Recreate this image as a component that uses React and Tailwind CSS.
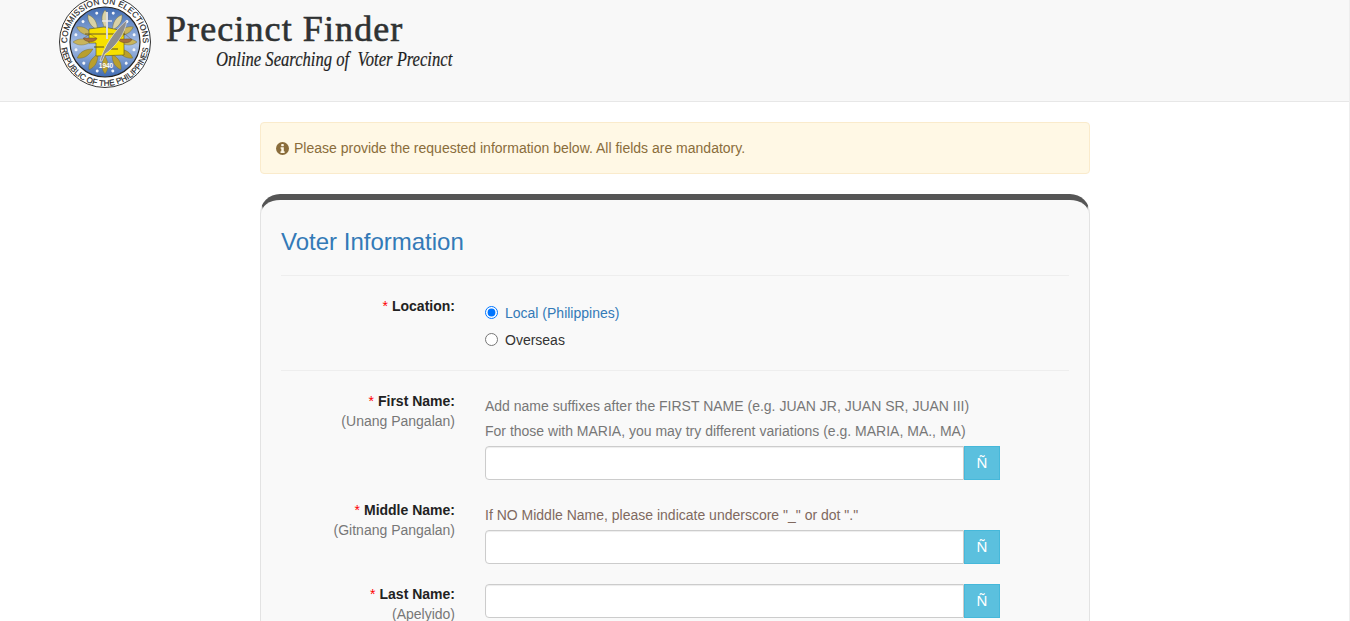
const SANS = 'font-["Liberation_Sans",Arial,sans-serif]'

function Seal() {
  const leaves = [0, 32, 62, 90, 120, 150, 180, 210, 240, 270, 298, 328]
  const dots = [16, 47, 76, 105, 135, 165, 195, 225, 255, 284, 313, 344]
  const leafColor = (a) => (a > 60 && a < 300 ? (a > 100 && a < 260 ? '#b99f2e' : '#c9b45c') : '#d9d2a6')
  return (
    <svg width="94" height="94" viewBox="0 0 94 94" className="block shrink-0">
      <defs>
        <linearGradient id="sky" x1="0" y1="0" x2="0" y2="1">
          <stop offset="0%" stopColor="#3f6bb2" />
          <stop offset="55%" stopColor="#a9c0e6" />
          <stop offset="100%" stopColor="#3f6bb2" />
        </linearGradient>
        <path id="arcTop" d="M 9 47 A 38 38 0 0 1 85 47" />
        <path id="arcBottom" d="M 3 47 A 44 44 0 0 0 91 47" />
      </defs>
      <circle cx="47" cy="47" r="45.5" fill="#fff" stroke="#333" strokeWidth="1" />
      <circle cx="47" cy="47" r="35" fill="url(#sky)" stroke="#222" strokeWidth="1.2" />
      <text fontSize="8.2" fill="#222" fontFamily="Liberation Sans, sans-serif" letterSpacing="0.2" stroke="#222" strokeWidth="0.15">
        <textPath href="#arcTop" startOffset="50%" textAnchor="middle">COMMISSION ON ELECTIONS</textPath>
      </text>
      <text fontSize="8.2" fill="#222" fontFamily="Liberation Sans, sans-serif" stroke="#222" strokeWidth="0.15">
        <textPath href="#arcBottom" startOffset="50%" textAnchor="middle">REPUBLIC OF THE PHILIPPINES</textPath>
      </text>
      {leaves.map((a) => (
        <path key={a} d="M47 15 C51 20 51 26 47 33 C43 26 43 20 47 15Z" fill={leafColor(a)} stroke="#6f6a33" strokeWidth="0.4" transform={`rotate(${a} 47 47)`} />
      ))}
      {dots.map((a) => (
        <circle key={a} cx="47" cy="17" r="1.5" fill="#f2f5fb" transform={`rotate(${a} 47 47)`} />
      ))}
      <path d="M31 34 L46 32 L66 36 V60 L38 61 V48 H31Z" fill="#f7e000" stroke="#57501a" strokeWidth="0.6" />
      <path d="M36 52 H46 M52 54 H60" stroke="#57501a" strokeWidth="1" />
      <path d="M27 39 H67" stroke="#6a5a2a" strokeWidth="1.2" />
      <path d="M25 43 H39 C38 48 27 48 25 43Z M60 44 H74 C73 49 62 49 60 44Z" fill="#a8703c" stroke="#5c4424" strokeWidth="0.4" />
      <path d="M32 39 L26 43 M32 39 L38 43 M67 39 L61 44 M67 39 L73 44" stroke="#5c4424" strokeWidth="0.4" />
      <path d="M49 17 V44" stroke="#dcdcdc" strokeWidth="2" />
      <path d="M44 26 H54" stroke="#e8e8e8" strokeWidth="1.4" />
      <path d="M42 66 C46 52 56 36 69 25 C67 40 57 52 47 59 L44 66Z" fill="#8e8e8e" stroke="#efefef" strokeWidth="0.6" />
      <text x="48" y="73" fontSize="6.5" fill="#fff" textAnchor="middle" fontFamily="Liberation Sans, sans-serif" fontWeight="700">1940</text>
    </svg>
  )
}

function InfoIcon() {
  return (
    <svg width="13" height="13" viewBox="0 0 13 13" className="mr-[5px] inline-block shrink-0">
      <circle cx="6.5" cy="6.5" r="6.5" fill="#8a6d3b" />
      <rect x="5.2" y="2" width="2.6" height="2.2" rx="0.4" fill="#fff8e5" />
      <path d="M4.6 5.3 H7.8 V9.3 H8.6 V10.9 H4.5 V9.3 H5.3 V6.8 H4.6Z" fill="#fff8e5" />
    </svg>
  )
}

function Label({ name, sub }) {
  return (
    <div className="w-[174px] shrink-0 text-right">
      <div className="h-5 leading-5 font-bold text-[#222]">
        <span className="mr-1 font-normal text-[#f00]">*</span>
        {name}:
      </div>
      {sub && <div className="h-5 leading-5 text-[#777]">({sub})</div>}
    </div>
  )
}

function NameInput() {
  return (
    <div className="flex h-[34px] w-[515px]">
      <input type="text" className="h-full min-w-0 flex-1 rounded-l-[4px] border border-[#ccc] bg-white shadow-[inset_0_1px_1px_rgba(0,0,0,0.075)] outline-none" />
      <button type="button" className="h-full w-[36px] shrink-0 border border-[#46b8da] bg-[#5bc0de] text-[15px] text-white">Ñ</button>
    </div>
  )
}

export default function App() {
  return (
    <div className={`h-[621px] overflow-hidden border-r border-[#eee] bg-white text-sm text-[#333] ${SANS}`}>
      <header className="flex h-[102px] items-start border-b border-[#e7e7e7] bg-[#f8f8f8] pl-[58px]">
        <div className="-mt-[5px]">
          <Seal />
        </div>
        <div className='ml-[14px] font-["Liberation_Serif",serif] text-[#2f3233]'>
          <div className="mt-[8px] text-[36px] leading-[42px] font-normal tracking-[1.1px] [-webkit-text-stroke:0.6px_#2f3233]">Precinct Finder</div>
          <div className="mt-[-3px] ml-[50px] origin-left scale-x-[0.81] text-[20.5px] leading-[24px] whitespace-nowrap text-[#1f1f1f] italic [-webkit-text-stroke:0.2px_#1f1f1f]">Online Searching of&nbsp; Voter Precinct</div>
        </div>
      </header>

      <main className="ml-[260px] w-[830px] pt-5">
        <div className="flex h-[52px] items-center rounded-[4px] border border-[#faebcc] bg-[#fff8e5] pl-[15px] text-[#8a6d3b]">
          <InfoIcon />
          <span>Please provide the requested information below. All fields are mandatory.</span>
        </div>

        <section className="mt-5 rounded-[20px] border border-t-[6px] border-[#e3e3e3] border-t-[#555] bg-[#f9f9f9] px-5">
          <h2 className="flex h-[75px] items-center pt-[9px] text-2xl font-normal text-[#337ab7]">Voter Information</h2>

          <div className="flex gap-[30px] border-t border-[#eee] pt-5 pb-[17px]">
            <Label name="Location" />
            <div className="pt-[3px]">
              <label className="flex h-[27px] items-center gap-[7px] text-[#337ab7]">
                <input type="radio" name="location" defaultChecked className="m-0 size-[13px]" />
                Local (Philippines)
              </label>
              <label className="flex h-[27px] items-center gap-[7px]">
                <input type="radio" name="location" className="m-0 size-[13px]" />
                Overseas
              </label>
            </div>
          </div>

          <div className="flex gap-[30px] border-t border-[#eee] pt-5">
            <Label name="First Name" sub="Unang Pangalan" />
            <div className="pt-[5px] text-[#777]">
              <p className="h-[25px] leading-5">Add name suffixes after the FIRST NAME (e.g. JUAN JR, JUAN SR, JUAN III)</p>
              <p className="h-[25px] leading-5">For those with MARIA, you may try different variations (e.g. MARIA, MA., MA)</p>
              <NameInput />
            </div>
          </div>

          <div className="mt-5 flex gap-[30px]">
            <Label name="Middle Name" sub="Gitnang Pangalan" />
            <div className="pt-[5px] text-[#80695f]">
              <p className="h-[25px] leading-5">If NO Middle Name, please indicate underscore "_" or dot "."</p>
              <NameInput />
            </div>
          </div>

          <div className="mt-5 flex gap-[30px]">
            <Label name="Last Name" sub="Apelyido" />
            <NameInput />
          </div>
          <div className="h-10" />
        </section>
      </main>
    </div>
  )
}
